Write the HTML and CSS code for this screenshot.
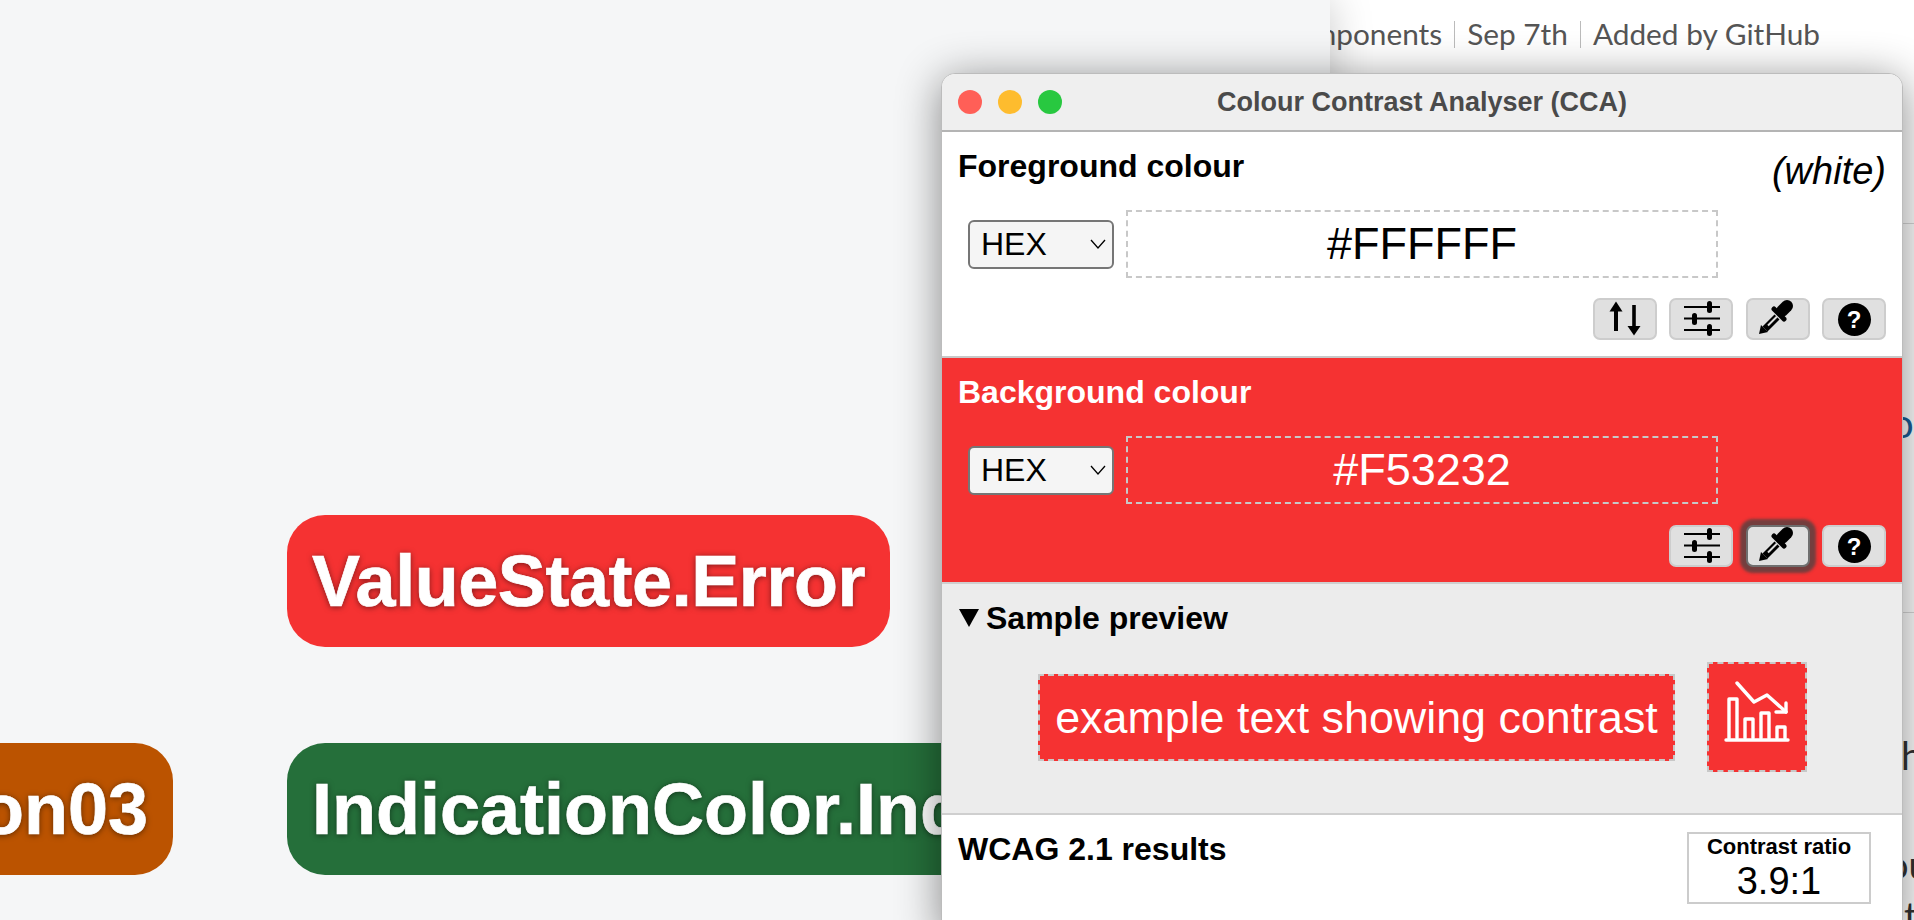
FILE: index.html
```html
<html>
<head>
<title>Colour Contrast Analyser</title>
<link rel="stylesheet" href="styles.css">
</head>
<body>
<div class="page">
    <div class="leftPanel">
        <div class="pillRow firstRow">
            <div class="pillSlot"></div>
            <div class="pill pillRed">ValueState.Error</div>
        </div>
        <div class="pillRow">
            <div class="pillSlot">
                <div class="pill pillOrange">IndicationColor.Indication03</div>
            </div>
            <div class="pill pillGreen">IndicationColor.Indication04</div>
        </div>
    </div>
    <div class="rightPanel">
        <div class="metaRow">
            <span>Web Components</span>
            <span class="metaSep"></span>
            <span>Sep 7th</span>
            <span class="metaSep"></span>
            <span>Added by GitHub</span>
        </div>
        <div class="rule ruleOne"></div>
        <div class="sliver sliverBlue">o</div>
        <div class="rule ruleTwo"></div>
        <div class="sliver sliverH">h</div>
        <div class="sliver sliverOu">ou</div>
        <div class="sliver sliverT">t</div>
    </div>
</div>

<!-- floating analyser window -->
<div class="ccaWindow">
    <div class="titleBar">
        <span class="light lightRed"></span>
        <span class="light lightYellow"></span>
        <span class="light lightGreen"></span>
        <div class="titleText">Colour Contrast Analyser (CCA)</div>
    </div>

    <div class="section fgSection">
        <div class="headRow">
            <h2>Foreground colour</h2>
            <span class="colourName">(white)</span>
        </div>
        <div class="inputRow">
            <div class="selectBox fgSelect">
                <span>HEX</span>
                <svg class="chevron" viewBox="0 0 16 10"><path d="M1 1l7 8 7-8" fill="none" stroke="#000" stroke-width="1.3"/></svg>
            </div>
            <div class="hexField">#FFFFFF</div>
        </div>
        <div class="btnRow fgBtns">
            <button class="iconBtn">
                <svg width="60" height="38" viewBox="0 0 60 38">
                    <path d="M21 10v21" stroke="#000" stroke-width="4" fill="none"/>
                    <path d="M21 1.5l6.5 10h-13z"/>
                    <path d="M39 5v22" stroke="#000" stroke-width="3.6" fill="none"/>
                    <path d="M39 35.5l6.5-9.5h-13z"/>
                </svg>
            </button>
            <button class="iconBtn">
                <svg width="60" height="38" viewBox="0 0 60 38">
                    <use href="#slidersIcon"/>
                </svg>
            </button>
            <button class="iconBtn">
                <svg width="60" height="38" viewBox="0 0 60 38">
                    <use href="#dropperIcon"/>
                </svg>
            </button>
            <button class="iconBtn"><span class="helpDot">?</span></button>
        </div>
    </div>

    <div class="section bgSection">
        <div class="headRow">
            <h2>Background colour</h2>
        </div>
        <div class="inputRow">
            <div class="selectBox bgSelect">
                <span>HEX</span>
                <svg class="chevron" viewBox="0 0 16 10"><path d="M1 1l7 8 7-8" fill="none" stroke="#000" stroke-width="1.3"/></svg>
            </div>
            <div class="hexField">#F53232</div>
        </div>
        <div class="btnRow">
            <button class="iconBtn">
                <svg width="60" height="38" viewBox="0 0 60 38">
                    <use href="#slidersIcon"/>
                </svg>
            </button>
            <button class="iconBtn focused">
                <svg width="60" height="38" viewBox="0 0 60 38">
                    <use href="#dropperIcon"/>
                </svg>
            </button>
            <button class="iconBtn"><span class="helpDot">?</span></button>
        </div>
    </div>

    <div class="section sampleSection">
        <div class="sampleHead"><span class="marker"></span>Sample preview</div>
        <div class="sampleRow">
            <div class="sampleText">example text showing contrast</div>
            <div class="sampleIcon">
                <svg width="96" height="106" viewBox="0 0 96 106">
                    <g fill="none" stroke="#fff" stroke-width="3.4" stroke-linecap="round" stroke-linejoin="round">
                        <path d="M28 19l17 19 13-7 19 17"/>
                        <path d="M77 39v9H67"/>
                        <path d="M17 76h62"/>
                        <path d="M21 76V37h8v39M37 76V57h8v19M53 76V51h8v25M69 76V65h8v11" transform="translate(-1 -2)"/>
                    </g>
                </svg>
            </div>
        </div>
    </div>

    <div class="section resultSection">
        <h2>WCAG 2.1 results</h2>
        <div class="ratioBox">
            <div class="ratioLabel">Contrast ratio</div>
            <div class="ratioValue">3.9:1</div>
        </div>
    </div>
</div>

<!-- shared icon shapes -->
<svg class="iconDefs">
    <defs>
        <g id="slidersIcon">
            <path d="M13 7h36M13 18.5h36M13 30h36" stroke="#000" stroke-width="2" fill="none"/>
            <rect x="36" y="1" width="5" height="12" rx="2.5"/>
            <rect x="21" y="13" width="5" height="12" rx="2.5"/>
            <rect x="36" y="24" width="5" height="12" rx="2.5"/>
        </g>
        <g id="dropperIcon">
            <path d="M34 11l5-5" stroke="#000" stroke-width="12" stroke-linecap="round" fill="none"/>
            <path d="M26 9l10 10" stroke="#000" stroke-width="5" stroke-linecap="round" fill="none"/>
            <path d="M29 17L17 29" stroke="#000" stroke-width="7" fill="none"/>
            <path d="M29 16.5l-9 9" stroke="#ddd" stroke-width="2" fill="none"/>
            <path d="M13 25l-2 9 9-2z"/>
        </g>
    </defs>
</svg>
</body>
</html>
```

FILE: styles.css
```css
html, body {
    margin: 0;
    height: 920px;
    overflow: hidden;
    font-family: "Liberation Sans", Arial, sans-serif;
    background-color: #fff;
}

.page {
    display: flex;
    height: 920px;
}

/* left side with the big pills */
.leftPanel {
    width: 1330px;
    flex-shrink: 0;
    background-color: #f5f6f7;
    box-shadow: 0 0 40px rgba(0, 0, 0, .22);
    padding-top: 515px;
    box-sizing: border-box;
    overflow: hidden;
    position: relative;
    z-index: 1;
}
.pillRow {
    display: flex;
    gap: 114px;
}
.firstRow {
    margin-bottom: 96px;
}
.pillSlot {
    width: 173px;
    flex-shrink: 0;
    display: flex;
    justify-content: flex-end;
}
.pill {
    flex-shrink: 0;
    height: 132px;
    line-height: 132px;
    padding: 0 25px;
    border-radius: 38px;
    color: #fff;
    font-size: 72px;
    font-weight: bold;
    white-space: nowrap;
    -webkit-text-stroke: .7px #fff;
    text-shadow: 0 1px 6px rgba(0, 0, 0, .55);
}
.pillRed {
    background-color: #f53232;
    letter-spacing: -.45px;
}
.pillOrange { background-color: #bb5300; }
.pillGreen { background-color: #256f3a; }

/* right side, mostly hidden by the window */
.rightPanel {
    flex: 1;
    min-width: 0;
    font-family: Lato, sans-serif;
    color: #555;
    overflow: hidden;
}
.metaRow {
    display: flex;
    justify-content: flex-end;
    align-items: center;
    white-space: nowrap;
    padding: 16px 94px 0 0;
    font-size: 29.8px;
    line-height: 36px;
    gap: 12px;
}
.metaRow > span {
    flex-shrink: 0;
}
.metaSep {
    width: 1px;
    height: 27px;
    background-color: #bbb;
}
.rule {
    height: 1px;
    background-color: #d8d8d8;
}
.ruleOne { margin-top: 171px; }
.ruleTwo { margin-top: 165px; }
.sliver {
    padding-left: 571px;
    font-size: 38px;
    line-height: 48px;
    color: #333;
    white-space: nowrap;
}
.sliverBlue {
    margin-top: 175px;
    margin-left: -10px;
    font-size: 40px;
    color: #1a5e96;
}
.sliverH { margin-top: 118px; }
.sliverOu { margin-top: 61px; margin-left: -14px; }
.sliverT { margin-top: 3px; margin-left: 3px; }

/* analyser window */
.ccaWindow {
    position: absolute;
    left: 941px;
    top: 73px;
    width: 962px;
    height: 860px;
    box-sizing: border-box;
    z-index: 2;
    background-color: #fff;
    border: 1px solid #bcbcbc;
    border-radius: 14px 14px 0 0;
    box-shadow: 0 6px 44px rgba(0, 0, 0, .46);
    overflow: hidden;
}
.titleBar {
    height: 56px;
    background-color: #efefef;
    border-bottom: 2px solid #b4b4b4;
    box-sizing: content-box;
    display: flex;
    align-items: center;
    padding-left: 16px;
    gap: 16px;
    position: relative;
}
.light {
    width: 24px;
    height: 24px;
    border-radius: 50%;
}
.lightRed { background-color: #ff5f57; }
.lightYellow { background-color: #febc2e; }
.lightGreen { background-color: #28c840; }
.titleText {
    position: absolute;
    left: 0;
    right: 0;
    text-align: center;
    font-size: 27px;
    font-weight: bold;
    color: #4a4a4a;
}

.section {
    padding: 0 16px;
    box-sizing: border-box;
}
.fgSection {
    height: 226px;
    border-bottom: 2px solid #c8c8c8;
    padding-top: 17px;
}
.bgSection {
    height: 226px;
    background-color: #f53232;
    border-bottom: 2px solid #cfcfcf;
    padding-top: 17px;
    color: #fff;
}
h2 {
    margin: 0;
    font-size: 32px;
    line-height: 34px;
    font-weight: bold;
}
.headRow {
    display: flex;
    justify-content: space-between;
    height: 44px;
}
.colourName {
    font-size: 38px;
    font-style: italic;
    line-height: 44px;
}
.inputRow {
    display: flex;
    align-items: center;
    margin-top: 17px;
    padding-left: 10px;
    gap: 12px;
}
.selectBox {
    width: 146px;
    height: 49px;
    box-sizing: border-box;
    background-color: #f5f5f5;
    border: 2px solid #767676;
    border-radius: 6px;
    display: flex;
    align-items: center;
    justify-content: space-between;
    padding: 0 6px 0 11px;
    font-size: 32px;
    color: #000;
}
.chevron {
    width: 16px;
    height: 10px;
}
.hexField {
    width: 592px;
    height: 68px;
    box-sizing: border-box;
    border: 2px dashed #c8c8c8;
    text-align: center;
    font-size: 45px;
    line-height: 64px;
}
.btnRow {
    display: flex;
    justify-content: flex-end;
    gap: 12.5px;
    margin-top: 21px;
}
.fgBtns {
    margin-top: 20px;
}
.iconBtn {
    width: 64px;
    height: 42px;
    padding: 0;
    box-sizing: border-box;
    background-color: #e0e0e0;
    border: 2px solid #cdcdcd;
    border-radius: 7px;
    display: flex;
    align-items: center;
    justify-content: center;
}
.iconBtn svg {
    overflow: visible;
}
.focused {
    border-color: #6f6f6f;
    box-shadow: 0 0 3px 6px rgba(80, 65, 65, .78);
}
.helpDot {
    width: 33px;
    height: 33px;
    border-radius: 50%;
    background-color: #000;
    color: #fff;
    font-size: 24px;
    font-weight: bold;
    line-height: 33px;
    text-align: center;
    font-family: "Liberation Sans", Arial, sans-serif;
}

.sampleSection {
    height: 231px;
    background-color: #ececec;
    border-bottom: 2px solid #cfcfcf;
    padding-top: 17px;
}
.sampleHead {
    display: flex;
    align-items: center;
    font-size: 32px;
    line-height: 34px;
    font-weight: bold;
}
.marker {
    width: 0;
    height: 0;
    border-left: 10px solid transparent;
    border-right: 10px solid transparent;
    border-top: 18px solid #000;
    margin: 0 7px 0 1px;
}
.sampleRow {
    display: flex;
    align-items: center;
    margin-top: 27px;
    padding-left: 80px;
    gap: 32px;
}
.sampleText {
    width: 637px;
    height: 87px;
    box-sizing: border-box;
    background-color: #f53232;
    border: 2px dashed #c8c8c8;
    color: #fff;
    font-size: 44.8px;
    line-height: 83px;
    text-align: center;
    white-space: nowrap;
}
.sampleIcon {
    width: 100px;
    height: 110px;
    box-sizing: border-box;
    background-color: #f53232;
    border: 2px dashed #c8c8c8;
}
.sampleIcon svg {
    display: block;
}

.resultSection {
    display: flex;
    justify-content: space-between;
    align-items: flex-start;
    padding-top: 17px;
    padding-right: 31px;
    height: 100px;
}
.ratioBox {
    width: 184px;
    height: 72px;
    box-sizing: border-box;
    border: 2px solid #ccc;
    text-align: center;
}
.ratioLabel {
    font-size: 22px;
    font-weight: bold;
    line-height: 26px;
}
.ratioValue {
    font-size: 38px;
    line-height: 42px;
}
.iconDefs {
    position: absolute;
    width: 0;
    height: 0;
}
```
